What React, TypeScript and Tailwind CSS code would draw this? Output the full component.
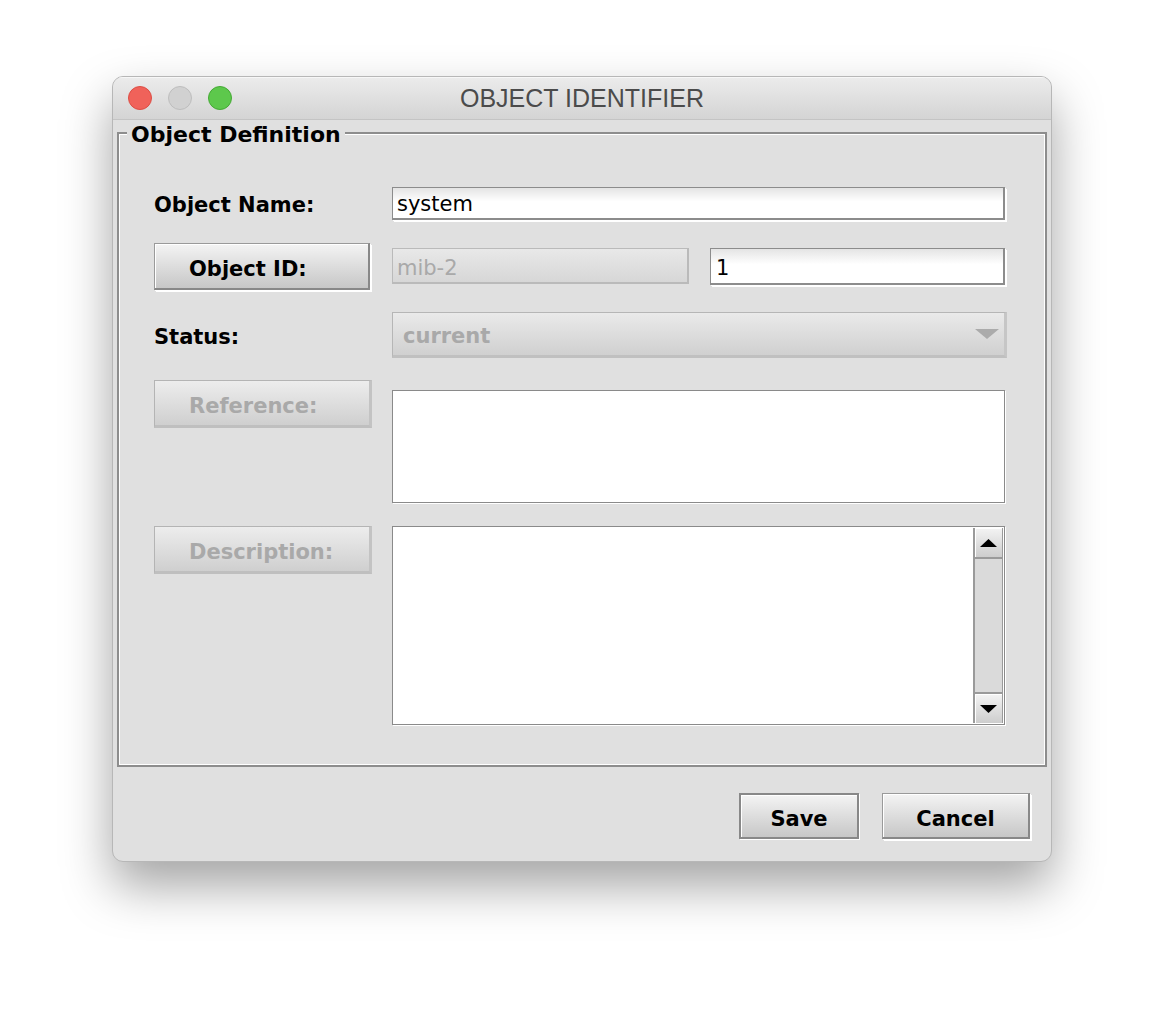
import clsx from 'clsx';

const LABEL = 'pt-[5px] text-[21px] font-bold leading-none text-black';

function Field({ value, className }: { value: string; className?: string }) {
    return (
        <div
            className={clsx(
                'flex items-center border-t border-l border-r-2 border-b-2 border-[#8c8c8c] bg-[linear-gradient(to_bottom,#e4e4e4,#ffffff_45%)] pt-[4px] pl-[4px] text-[21px] leading-none text-black shadow-[1px_1px_0_#ffffff,2px_2px_0_#ffffff]',
                className,
            )}
        >
            {value}
        </div>
    );
}

function DisabledField({ value, className }: { value: string; className?: string }) {
    return (
        <div
            className={clsx(
                'flex items-center border-t border-l border-r-2 border-b-2 border-[#bababa] bg-gradient-to-b from-[#e8e8e8] to-[#d7d7d7] pt-[5px] pl-[4px] text-[21px] leading-none text-[#a9a9a9]',
                className,
            )}
        >
            {value}
        </div>
    );
}

function Button({ label, className, primary }: { label: string; className?: string; primary?: boolean }) {
    return (
        <div
            className={clsx(
                'flex items-center bg-gradient-to-b from-[#f4f4f4] to-[#c7c7c7] pt-[7px] text-[21px] font-bold leading-none text-black',
                primary
                    ? 'border-2 border-[#888888] shadow-[inset_1px_1px_0_#ffffff,1px_1px_0_#ffffff]'
                    : 'border-t border-l border-r-2 border-b-2 border-t-[#9a9a9a] border-l-[#9a9a9a] border-r-[#888888] border-b-[#888888] shadow-[inset_1px_1px_0_#ffffff,1px_1px_0_#ffffff,2px_2px_0_#ffffff]',
                className,
            )}
        >
            {label}
        </div>
    );
}

function DisabledButton({ label }: { label: string }) {
    return (
        <div className="flex h-[48px] w-[218px] items-center border-t border-l border-r-[3px] border-b-[3px] border-t-[#b4b4b4] border-l-[#b4b4b4] border-r-[#c3c3c3] border-b-[#bfbfbf] bg-gradient-to-b from-[#ededed] to-[#cfcfcf] pt-[7px] pl-[34px] text-[21px] font-bold leading-none text-[#a9a9a9]">
            {label}
        </div>
    );
}

function ScrollButton({ up }: { up?: boolean }) {
    return (
        <div
            className={clsx(
                'flex h-[31px] items-center justify-center bg-gradient-to-b from-[#f4f4f4] to-[#cdcdcd] shadow-[inset_1px_1px_0_#ffffff]',
                up ? 'border-b-2 border-[#9a9a9a]' : 'border-t-2 border-[#9a9a9a]',
            )}
        >
            <svg width="17" height="8" viewBox="0 0 17 8">
                {up ? <polygon points="8.5,0 17,8 0,8" fill="#000" /> : <polygon points="0,0 17,0 8.5,8" fill="#000" />}
            </svg>
        </div>
    );
}

export default function App() {
    return (
        <div className="min-h-screen bg-white pt-[76px] pl-[112px] font-['DejaVu_Sans',sans-serif]">
            <div className="flex h-[786px] w-[940px] flex-col overflow-hidden rounded-[11px] border border-[#b7b7b7] bg-[#e0e0e0] shadow-[0_24px_50px_rgba(0,0,0,0.36)]">

                {/* Title bar */}
                <div className="grid h-[43px] shrink-0 grid-cols-[1fr_auto_1fr] items-center border-b border-[#c4c4c4] bg-gradient-to-b from-[#ececec] to-[#d4d4d4] shadow-[inset_0_1px_0_#f7f7f7]">
                    <div className="flex items-center gap-4 pl-[15px]">
                        <span className="size-6 rounded-full border border-[#dc4e45] bg-[#f0625a]" />
                        <span className="size-6 rounded-full border border-[#bdbdbd] bg-[#d1d1d1]" />
                        <span className="size-6 rounded-full border border-[#45a935] bg-[#5dc84c]" />
                    </div>
                    <div className="font-['Liberation_Sans',Arial,sans-serif] text-[25px] leading-none text-[#4b4b4b]">
                        OBJECT IDENTIFIER
                    </div>
                    <div />
                </div>

                <div className="flex flex-1 flex-col px-[4px]">
                    <fieldset className="border-2 border-[#8d8d8d] shadow-[inset_0_0_0_1px_#ffffff]">
                        <legend className="ml-[8px] bg-[#e0e0e0] px-[4px] text-[22px] font-bold leading-[26px] text-black">
                            <span className="relative top-[2px]">Object Definition</span>
                        </legend>

                        <div className="flex flex-col pt-[40px] pb-[40px] pl-[35px]">
                            {/* Object Name */}
                            <div className="flex h-[34px] items-center gap-[20px]">
                                <div className={clsx(LABEL, 'w-[218px]')}>Object Name:</div>
                                <Field value="system" className="h-[33px] w-[613px]" />
                            </div>

                            {/* Object ID */}
                            <div className="mt-[23px] flex h-[48px] items-start gap-[20px]">
                                <Button label="Object ID:" className="h-[47px] w-[216px] pl-[34px]" />
                                <div className="ml-[2px] mt-[5px] flex gap-[21px]">
                                    <DisabledField value="mib-2" className="h-[36px] w-[297px]" />
                                    <Field value="1" className="h-[37px] w-[295px] pl-[5px]" />
                                </div>
                            </div>

                            {/* Status */}
                            <div className="mt-[21px] flex h-[46px] items-center gap-[20px]">
                                <div className={clsx(LABEL, 'w-[218px]')}>Status:</div>
                                <div className="flex h-[46px] w-[615px] items-center justify-between border-t border-l border-r-[3px] border-b-[3px] border-t-[#b6b6b6] border-l-[#b6b6b6] border-r-[#c6c6c6] border-b-[#c0c0c0] bg-gradient-to-b from-[#eaeaea] to-[#d0d0d0] pl-[10px] pr-[5px]">
                                    <span className="pt-[4px] text-[21px] font-bold leading-none text-[#a9a9a9]">current</span>
                                    <svg width="24" height="10" viewBox="0 0 24 10">
                                        <polygon points="0,0 24,0 12,10" fill="#ababab" />
                                    </svg>
                                </div>
                            </div>

                            {/* Reference */}
                            <div className="mt-[22px] flex items-start gap-[20px]">
                                <DisabledButton label="Reference:" />
                                <div className="mt-[10px] h-[113px] w-[613px] border border-[#8a8a8a] bg-white shadow-[1px_1px_0_#ffffff]" />
                            </div>

                            {/* Description */}
                            <div className="mt-[23px] flex items-start gap-[20px]">
                                <DisabledButton label="Description:" />
                                <div className="flex h-[199px] w-[613px] border border-[#8a8a8a] bg-white p-[1px] pl-0 shadow-[1px_1px_0_#ffffff]">
                                    <div className="flex-1" />
                                    <div className="flex w-[30px] flex-col border-l-2 border-r border-[#9a9a9a]">
                                        <ScrollButton up />
                                        <div className="flex-1 bg-[#dadada]" />
                                        <ScrollButton />
                                    </div>
                                </div>
                            </div>
                        </div>
                    </fieldset>

                    {/* Actions */}
                    <div className="flex justify-end gap-[23px] pt-[26px] pr-[17px]">
                        <Button label="Save" primary className="h-[46px] w-[120px] justify-center" />
                        <Button label="Cancel" className="h-[46px] w-[148px] justify-center" />
                    </div>
                </div>
            </div>
        </div>
    );
}
